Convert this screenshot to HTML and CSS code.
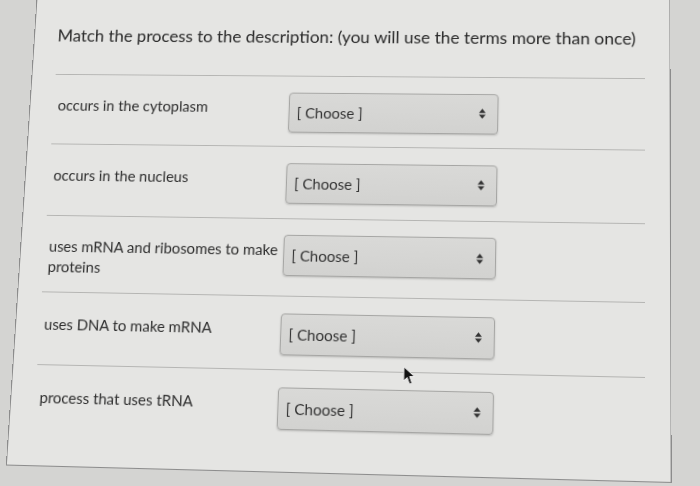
FILE: index.html
```html
<!DOCTYPE html>
<html>
<head>
<meta charset="utf-8">
<link rel="stylesheet" href="styles.css">
</head>
<body>
<div class="panel">
  <p class="title">Match the process to the description: (you will use the terms more than once)</p>
  <div class="row">
    <div class="label">occurs in the cytoplasm</div>
    <div class="select"><span>[ Choose ]</span><svg class="arrows" width="7" height="11" viewBox="0 0 8 12"><path d="M4 0 L8 5 L0 5 Z M0 7 L8 7 L4 12 Z" fill="#333"/></svg></div>
  </div>
  <div class="row">
    <div class="label">occurs in the nucleus</div>
    <div class="select"><span>[ Choose ]</span><svg class="arrows" width="7" height="11" viewBox="0 0 8 12"><path d="M4 0 L8 5 L0 5 Z M0 7 L8 7 L4 12 Z" fill="#333"/></svg></div>
  </div>
  <div class="row">
    <div class="label">uses mRNA and ribosomes to make proteins</div>
    <div class="select"><span>[ Choose ]</span><svg class="arrows" width="7" height="11" viewBox="0 0 8 12"><path d="M4 0 L8 5 L0 5 Z M0 7 L8 7 L4 12 Z" fill="#333"/></svg></div>
  </div>
  <div class="row">
    <div class="label">uses DNA to make mRNA</div>
    <div class="select"><span>[ Choose ]</span><svg class="arrows" width="7" height="11" viewBox="0 0 8 12"><path d="M4 0 L8 5 L0 5 Z M0 7 L8 7 L4 12 Z" fill="#333"/></svg></div>
  </div>
  <div class="row last">
    <div class="label">process that uses tRNA</div>
    <div class="select"><span>[ Choose ]</span><svg class="arrows" width="7" height="11" viewBox="0 0 8 12"><path d="M4 0 L8 5 L0 5 Z M0 7 L8 7 L4 12 Z" fill="#333"/></svg></div>
  </div>
  <svg class="cursor" width="14" height="20" viewBox="0 0 14 20"><path d="M1 1 L1 15 L4.5 11.5 L7 18 L9.5 17 L7 10.5 L12 10.5 Z" fill="#111" stroke="#eee" stroke-width="1"/></svg>
</div>
</body>
</html>
```

FILE: styles.css
```css
html, body {
  margin: 0;
  padding: 0;
}
body {
  background: #d4d4d2;
  font-family: Lato, "Open Sans", sans-serif;
  color: #2e2e2e;
  width: 700px;
  height: 486px;
  overflow: hidden;
}
.panel {
  position: relative;
  box-sizing: border-box;
  width: 670px;
  margin: -40px 0 0 1px;
  background: #e5e5e3;
  border: 1px solid #8c8c8c;
  border-top: none;
  padding: 60.3px 25px 26.7px 25px;
  transform-origin: 644px 290px;
  transform: perspective(1000px) rotateX(6deg) rotateY(-2.6deg) skewY(1.15deg);
}
.title {
  margin: 0 0 29.9px -0.5px;
  font-size: 18px;
  line-height: 24px;
  white-space: nowrap;
  color: #2a2a2a;
}
.row {
  display: flex;
  align-items: flex-start;
  border-top: 1px solid #b5b5b3;
  padding: 16.5px 0 14.8px 0;
}
.label {
  width: 249.5px;
  box-sizing: border-box;
  flex: none;
  padding-left: 4.5px;
  margin-top: 5px;
  font-size: 15.5px;
  line-height: 21px;
}
.select {
  box-sizing: border-box;
  width: 218px;
  height: 42px;
  display: flex;
  align-items: center;
  justify-content: space-between;
  padding: 0 12px 0 8px;
  border: 1px solid #a6a6a4;
  border-radius: 4px;
  background: linear-gradient(#d9d9d7, #d2d2d0);
  box-shadow: 0 1px 2px rgba(0,0,0,0.18);
  font-size: 15.5px;
  color: #333;
}
.cursor {
  position: absolute;
  left: 400.7px;
  top: 409.5px;
}
```
